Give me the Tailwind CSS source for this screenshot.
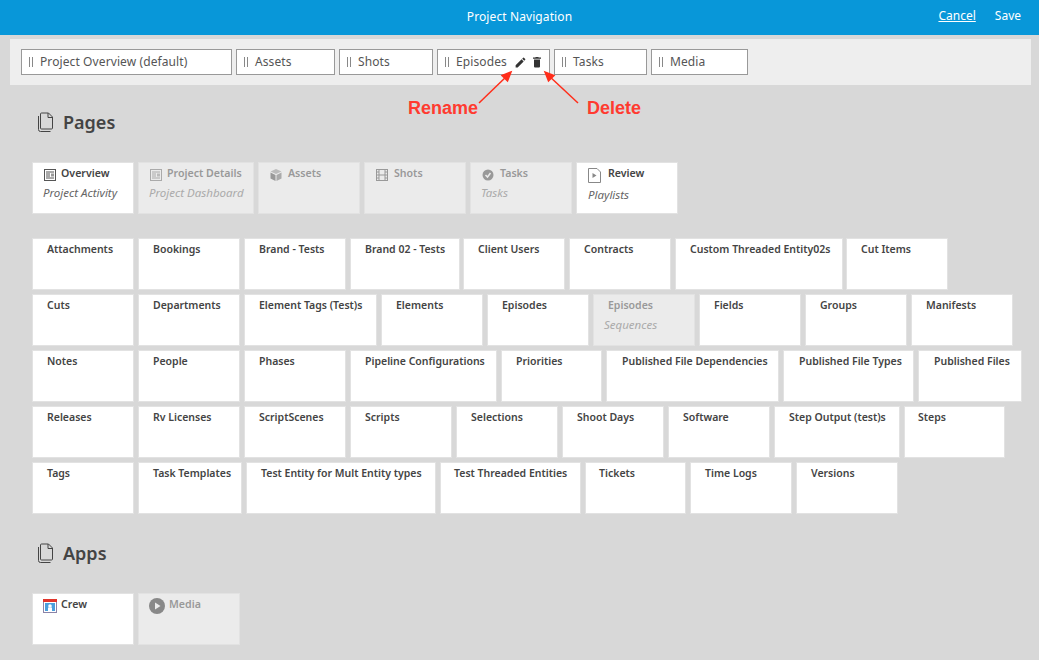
<!DOCTYPE html>
<html lang="en">
  <head>
    <meta charset="UTF-8" />
    <title>Project Navigation</title>
    <script src="https://cdn.jsdelivr.net/npm/@tailwindcss/browser@4"></script>
  </head>

  <body class="relative w-[1039px] h-[660px] overflow-hidden bg-[#d8d8d8] font-['Noto_Sans',sans-serif] text-[#444]">
    <!-- Header -->
    <header class="relative h-[35px] bg-[#0897d9] text-white text-[12px] flex items-center justify-center pb-[2px]">
      <span class="tracking-[0.1px]">Project Navigation</span>
      <div class="absolute right-[18px] top-[8px] flex gap-[19px] leading-[16px]">
        <a class="underline">Cancel</a>
        <a>Save</a>
      </div>
    </header>

    <!-- Tab bar -->
    <div class="mt-[4px] ml-[10px] w-[1021px] h-[46px] bg-[#eeeeee] pl-[11px] pt-[10px] flex gap-[4px] text-[12px] tracking-[0.1px] text-[#555]">
      <div class="w-[211px] h-[26px] bg-white border border-[#999] pl-[7px] flex items-center"><span class="w-[4px] h-[10px] mr-[7px] border-x border-[#888]"></span>Project Overview (default)</div>
      <div class="w-[99px] h-[26px] bg-white border border-[#999] pl-[7px] flex items-center"><span class="w-[4px] h-[10px] mr-[7px] border-x border-[#888]"></span>Assets</div>
      <div class="w-[94px] h-[26px] bg-white border border-[#999] pl-[7px] flex items-center"><span class="w-[4px] h-[10px] mr-[7px] border-x border-[#888]"></span>Shots</div>
      <div class="w-[113px] h-[26px] bg-white border border-[#999] pl-[7px] flex items-center">
        <span class="w-[4px] h-[10px] mr-[7px] border-x border-[#888]"></span>Episodes
        <svg class="ml-[7px]" width="13" height="13" viewBox="0 0 24 24" fill="#333"><path d="M3 17.250V21h3.750L17.810 9.940l-3.750-3.750L3 17.250zM20.710 7.040a1 1 0 0 0 0-1.410l-2.340-2.340a1 1 0 0 0-1.410 0l-1.830 1.830 3.750 3.750 1.830-1.830z"/></svg>
        <svg class="ml-[4px]" width="12" height="12" viewBox="0 0 24 24" fill="#333"><path d="M6 21a2 2 0 0 0 2 2h8a2 2 0 0 0 2-2V7H6v14zM20 3h-4.500l-1-1h-5l-1 1H4v2.500h16V3z"/></svg>
      </div>
      <div class="w-[93px] h-[26px] bg-white border border-[#999] pl-[7px] flex items-center"><span class="w-[4px] h-[10px] mr-[7px] border-x border-[#888]"></span>Tasks</div>
      <div class="w-[97px] h-[26px] bg-white border border-[#999] pl-[7px] flex items-center"><span class="w-[4px] h-[10px] mr-[7px] border-x border-[#888]"></span>Media</div>
    </div>

    <!-- Pages -->
    <section class="pl-[32px]">
      <h2 class="mt-[23px] h-[28px] pl-[6px] flex items-center gap-[9px] text-[18px] font-semibold leading-none">
        <svg width="16" height="20" viewBox="0 0 16 20" fill="none" stroke="#444" stroke-width="1"><path d="M3.500 1h7l4 4v11a1 1 0 0 1-1 1h-10a1 1 0 0 1-1-1V2a1 1 0 0 1 1-1z"/><path d="M10 1v4.500h4.500"/><path d="M.5 4v13.500a2 2 0 0 0 2 2h10"/></svg>
        Pages
      </h2>

      <div class="mt-[26px] flex gap-[4px] text-[10.6px]">
        <div class="w-[102px] h-[52px] bg-white border border-[#e2e2e2] pl-[11px] pt-[2px]">
          <div class="flex items-center gap-[5px] font-semibold h-[18px]">
            <svg class="mt-[2px]" width="12" height="12" viewBox="0 0 12 12" fill="none" stroke="#555"><rect x=".5" y=".5" width="11" height="11"/><path d="M2 3h8M2 5h4M2 7h4M2 9h8"/><rect x="7" y="4.500" width="3" height="3" fill="#999" stroke="none"/></svg>
            Overview
          </div>
          <div class="mt-[1px] italic text-[11.5px] text-[#666] -ml-[1px] leading-[18px] whitespace-nowrap">Project Activity</div>
        </div>
        <div class="w-[116px] h-[52px] bg-[#ebebeb] border border-[#e2e2e2] pl-[11px] pt-[2px] text-[#999]">
          <div class="flex items-center gap-[5px] font-semibold h-[18px]">
            <svg class="mt-[2px]" width="12" height="12" viewBox="0 0 12 12" fill="none" stroke="#aaa"><rect x=".5" y=".5" width="11" height="11"/><path d="M2 3h8M2 5h4M2 7h4M2 9h8"/><rect x="7" y="4.500" width="3" height="3" fill="#bbb" stroke="none"/></svg>
            Project Details
          </div>
          <div class="mt-[1px] italic text-[11.5px] text-[#aaa] -ml-[1px] leading-[18px] whitespace-nowrap">Project Dashboard</div>
        </div>
        <div class="w-[102px] h-[52px] bg-[#ebebeb] border border-[#e2e2e2] pl-[11px] pt-[2px] text-[#999]">
          <div class="flex items-center gap-[6px] font-semibold h-[18px]">
            <svg class="mt-[2px]" width="12" height="12" viewBox="0 0 12 12"><path d="M6 0l5.500 2.500L6 5 .5 2.500z" fill="#bbb"/><path d="M.5 3.500L5.500 6v6L.5 9.500z" fill="#999"/><path d="M11.500 3.500L6.500 6v6l5-2.500z" fill="#aaa"/></svg>
            Assets
          </div>
        </div>
        <div class="w-[102px] h-[52px] bg-[#ebebeb] border border-[#e2e2e2] pl-[11px] pt-[2px] text-[#999]">
          <div class="flex items-center gap-[6px] font-semibold h-[18px]">
            <svg class="mt-[2px]" width="12" height="12" viewBox="0 0 12 12" fill="none" stroke="#999"><rect x=".5" y=".5" width="11" height="11"/><path d="M3 .5v11M9 .5v11M3 6h6M.5 3h2.500M.5 6h2.500M.5 9h2.500M9 3h2.500M9 6h2.500M9 9h2.500"/></svg>
            Shots
          </div>
        </div>
        <div class="w-[102px] h-[52px] bg-[#ebebeb] border border-[#e2e2e2] pl-[11px] pt-[2px] text-[#999]">
          <div class="flex items-center gap-[6px] font-semibold h-[18px]">
            <svg class="mt-[2px]" width="12" height="12" viewBox="0 0 12 12"><circle cx="6" cy="6" r="5.500" fill="#999"/><path d="M3.500 6l2 2 3-4" fill="none" stroke="#ebebeb" stroke-width="1.500"/></svg>
            Tasks
          </div>
          <div class="mt-[1px] italic text-[11.5px] text-[#aaa] -ml-[1px] leading-[18px]">Tasks</div>
        </div>
        <div class="w-[102px] h-[52px] bg-white border border-[#e2e2e2] pl-[11px] pt-[2px]">
          <div class="flex items-center gap-[7px] font-semibold h-[18px]">
            <svg class="mt-[2px]" width="13" height="15" viewBox="0 0 13 15" fill="none" stroke="#888"><path d="M.5 .5h8.500l3.500 3.500v10.500H.5z"/><path d="M4.500 5l4 2.500-4 2.500z" fill="#888" stroke="none"/></svg>
            Review
          </div>
          <div class="mt-[3px] italic text-[11.5px] text-[#666] leading-[18px]">Playlists</div>
        </div>
      </div>

      <!-- All the other pages -->
      <div class="mt-[24px] flex gap-[4px] text-[10.5px] font-semibold">
        <div class="w-[102px] h-[52px] bg-white border border-[#e2e2e2] pl-[14px] pt-[3px]">Attachments</div>
        <div class="w-[102px] h-[52px] bg-white border border-[#e2e2e2] pl-[14px] pt-[3px]">Bookings</div>
        <div class="w-[102px] h-[52px] bg-white border border-[#e2e2e2] pl-[14px] pt-[3px]">Brand - Tests</div>
        <div class="w-[110px] h-[52px] bg-white border border-[#e2e2e2] pl-[14px] pt-[3px]">Brand 02 - Tests</div>
        <div class="w-[102px] h-[52px] -ml-[1px] bg-white border border-[#e2e2e2] pl-[14px] pt-[3px]">Client Users</div>
        <div class="w-[102px] h-[52px] bg-white border border-[#e2e2e2] pl-[14px] pt-[3px]">Contracts</div>
        <div class="w-[168px] h-[52px] bg-white border border-[#e2e2e2] pl-[14px] pt-[3px]">Custom Threaded Entity02s</div>
        <div class="w-[102px] h-[52px] -ml-[1px] bg-white border border-[#e2e2e2] pl-[14px] pt-[3px]">Cut Items</div>
      </div>
      <div class="mt-[4px] flex gap-[4px] text-[10.5px] font-semibold">
        <div class="w-[102px] h-[52px] bg-white border border-[#e2e2e2] pl-[14px] pt-[3px]">Cuts</div>
        <div class="w-[102px] h-[52px] bg-white border border-[#e2e2e2] pl-[14px] pt-[3px]">Departments</div>
        <div class="w-[133px] h-[52px] bg-white border border-[#e2e2e2] pl-[14px] pt-[3px]">Element Tags (Test)s</div>
        <div class="w-[102px] h-[52px] bg-white border border-[#e2e2e2] pl-[14px] pt-[3px]">Elements</div>
        <div class="w-[102px] h-[52px] bg-white border border-[#e2e2e2] pl-[14px] pt-[3px]">Episodes</div>
        <div class="w-[102px] h-[52px] bg-[#ebebeb] border border-[#e2e2e2] pl-[14px] pt-[3px] text-[#999]">Episodes<div class="mt-[2px] -ml-[4px] pl-[-4px] text-[11.5px] font-normal italic text-[#aaa]">Sequences</div></div>
        <div class="w-[102px] h-[52px] bg-white border border-[#e2e2e2] pl-[14px] pt-[3px]">Fields</div>
        <div class="w-[102px] h-[52px] bg-white border border-[#e2e2e2] pl-[14px] pt-[3px]">Groups</div>
        <div class="w-[102px] h-[52px] bg-white border border-[#e2e2e2] pl-[14px] pt-[3px]">Manifests</div>
      </div>
      <div class="mt-[4px] flex gap-[4px] text-[10.5px] font-semibold">
        <div class="w-[102px] h-[52px] bg-white border border-[#e2e2e2] pl-[14px] pt-[3px]">Notes</div>
        <div class="w-[102px] h-[52px] bg-white border border-[#e2e2e2] pl-[14px] pt-[3px]">People</div>
        <div class="w-[102px] h-[52px] bg-white border border-[#e2e2e2] pl-[14px] pt-[3px]">Phases</div>
        <div class="w-[147px] h-[52px] bg-white border border-[#e2e2e2] pl-[14px] pt-[3px]">Pipeline Configurations</div>
        <div class="w-[101px] h-[52px] bg-white border border-[#e2e2e2] pl-[14px] pt-[3px]">Priorities</div>
        <div class="w-[173px] h-[52px] bg-white border border-[#e2e2e2] pl-[15px] pt-[3px]">Published File Dependencies</div>
        <div class="w-[131px] h-[52px] bg-white border border-[#e2e2e2] pl-[15px] pt-[3px]">Published File Types</div>
        <div class="w-[104px] h-[52px] bg-white border border-[#e2e2e2] pl-[15px] pt-[3px] whitespace-nowrap">Published Files</div>
      </div>
      <div class="mt-[4px] flex gap-[4px] text-[10.5px] font-semibold">
        <div class="w-[102px] h-[52px] bg-white border border-[#e2e2e2] pl-[14px] pt-[3px]">Releases</div>
        <div class="w-[102px] h-[52px] bg-white border border-[#e2e2e2] pl-[14px] pt-[3px]">Rv Licenses</div>
        <div class="w-[102px] h-[52px] bg-white border border-[#e2e2e2] pl-[14px] pt-[3px]">ScriptScenes</div>
        <div class="w-[102px] h-[52px] bg-white border border-[#e2e2e2] pl-[14px] pt-[3px]">Scripts</div>
        <div class="w-[102px] h-[52px] bg-white border border-[#e2e2e2] pl-[14px] pt-[3px]">Selections</div>
        <div class="w-[102px] h-[52px] bg-white border border-[#e2e2e2] pl-[14px] pt-[3px]">Shoot Days</div>
        <div class="w-[102px] h-[52px] bg-white border border-[#e2e2e2] pl-[14px] pt-[3px]">Software</div>
        <div class="w-[126px] h-[52px] bg-white border border-[#e2e2e2] pl-[14px] pt-[3px] whitespace-nowrap">Step Output (test)s</div>
        <div class="w-[101px] h-[52px] bg-white border border-[#e2e2e2] pl-[13px] pt-[3px]">Steps</div>
      </div>
      <div class="mt-[4px] flex gap-[4px] text-[10.5px] font-semibold">
        <div class="w-[102px] h-[52px] bg-white border border-[#e2e2e2] pl-[14px] pt-[3px]">Tags</div>
        <div class="w-[104px] h-[52px] bg-white border border-[#e2e2e2] pl-[14px] pt-[3px]">Task Templates</div>
        <div class="w-[190px] h-[52px] bg-white border border-[#e2e2e2] pl-[14px] pt-[3px] whitespace-nowrap">Test Entity for Mult Entity types</div>
        <div class="w-[141px] h-[52px] bg-white border border-[#e2e2e2] pl-[13px] pt-[3px] whitespace-nowrap">Test Threaded Entities</div>
        <div class="w-[101px] h-[52px] bg-white border border-[#e2e2e2] pl-[13px] pt-[3px]">Tickets</div>
        <div class="w-[102px] h-[52px] bg-white border border-[#e2e2e2] pl-[14px] pt-[3px]">Time Logs</div>
        <div class="w-[102px] h-[52px] bg-white border border-[#e2e2e2] pl-[14px] pt-[3px]">Versions</div>
      </div>

      <!-- Apps -->
      <h2 class="mt-[25px] h-[28px] pl-[6px] flex items-center gap-[9px] text-[18px] font-semibold leading-none">
        <svg width="16" height="20" viewBox="0 0 16 20" fill="none" stroke="#444" stroke-width="1"><path d="M3.500 1h7l4 4v11a1 1 0 0 1-1 1h-10a1 1 0 0 1-1-1V2a1 1 0 0 1 1-1z"/><path d="M10 1v4.500h4.500"/><path d="M.5 4v13.500a2 2 0 0 0 2 2h10"/></svg>
        Apps
      </h2>
      <div class="mt-[26px] flex gap-[4px] text-[10.6px] font-semibold">
        <div class="w-[102px] h-[52px] bg-white border border-[#e2e2e2] pl-[10px] pt-[2px]">
          <div class="flex items-center gap-[4px] h-[18px]">
            <svg class="mt-[2px]" width="14" height="14" viewBox="0 0 14 14"><rect x=".5" y=".5" width="13" height="13" fill="#fff" stroke="#8a84a8"/><rect width="14" height="3" fill="#e0352b"/><rect x="2" y="4" width="10" height="8" fill="#4a9fdc"/><circle cx="7" cy="7" r="1.800" fill="#fff"/><rect x="5" y="8.500" width="4" height="3.500" fill="#fff"/></svg>
            Crew
          </div>
        </div>
        <div class="w-[102px] h-[52px] bg-[#ebebeb] border border-[#e2e2e2] pl-[10px] pt-[2px] text-[#999]">
          <div class="flex items-center gap-[4px] h-[18px]">
            <svg class="mt-[2px]" width="16" height="16" viewBox="0 0 16 16"><circle cx="8" cy="8" r="8" fill="#888"/><path d="M6 4.500l5.500 3.500L6 11.500z" fill="#ebebeb"/></svg>
            Media
          </div>
        </div>
      </div>
    </section>

    <!-- Annotations drawn over the screenshot -->
    <span class="absolute left-[408px] top-[97px] font-['Liberation_Sans',sans-serif] font-bold text-[18px] leading-[22px] text-[#ff3b30]">Rename</span>
    <span class="absolute left-[587px] top-[97px] font-['Liberation_Sans',sans-serif] font-bold text-[18px] leading-[22px] text-[#ff3b30]">Delete</span>
    <svg class="absolute left-0 top-0" width="1039" height="660" fill="none" stroke="#ff2d1a" stroke-width="1.500">
      <path d="M479 103L508 75"/>
      <path d="M511 72l-9 3.500 5.500 5.500z" fill="#ff2d1a"/>
      <path d="M578 103L548 75"/>
      <path d="M545 72l3.500 9 5.500-5.500z" fill="#ff2d1a"/>
    </svg>
  </body>
</html>
